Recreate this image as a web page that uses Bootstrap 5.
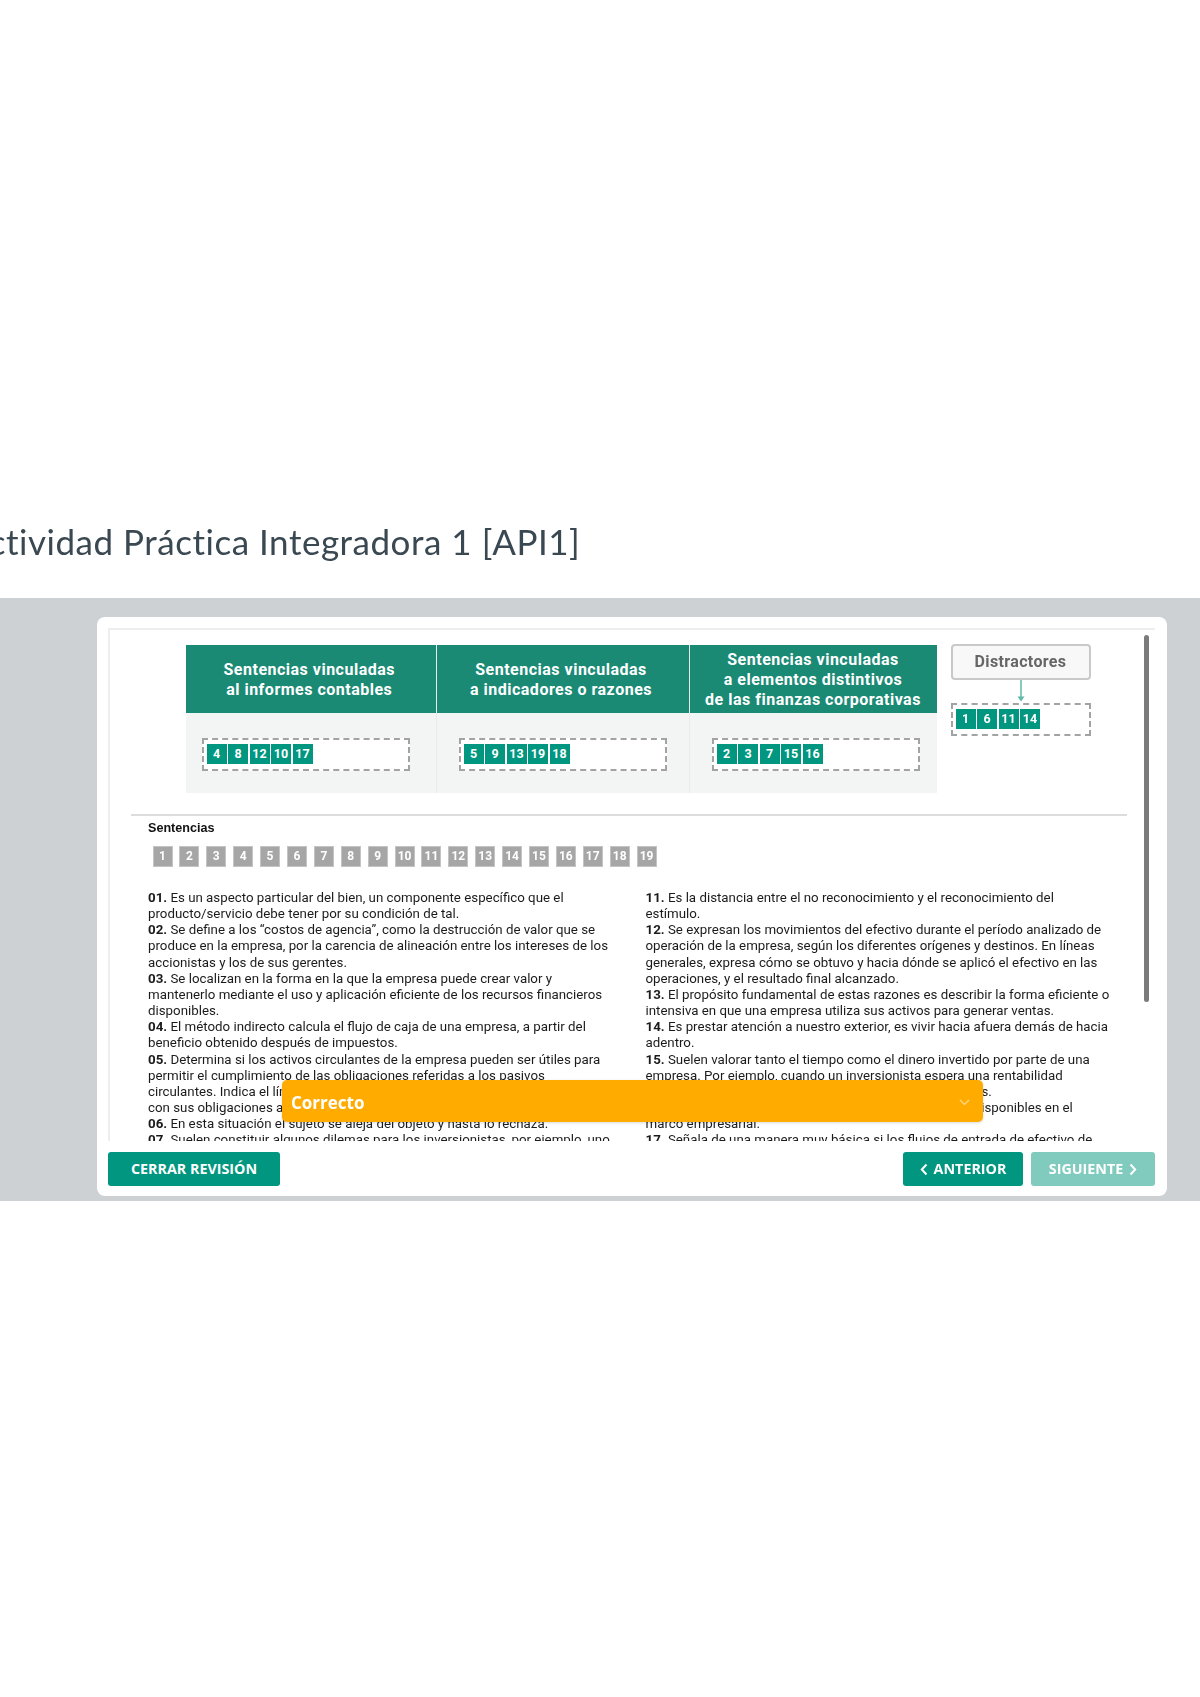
<!DOCTYPE html>
<html lang="es">
<head>
<meta charset="utf-8">
<title>Actividad Práctica Integradora 1 [API1]</title>
<link href="https://cdn.jsdelivr.net/npm/bootstrap@5.3.0/dist/css/bootstrap.min.css" rel="stylesheet">
<style>
html,body{background:#fff;margin:0}
.pagewrap{width:1200px;height:1697px;overflow:hidden;filter:blur(.6px)}
.titlezone{height:598px;padding-top:518px;overflow:hidden}
.titletext{font-family:Lato,sans-serif;font-size:35px;line-height:47px;font-weight:400;color:#3a4852;margin:0 0 0 -35px;white-space:nowrap;letter-spacing:.52px;font-variant-ligatures:none}
.band{background:#cdd1d4;height:603px;padding:19px 33px 5px 97px}
.sheet{background:#fff;border-radius:8px;height:579px;padding:11px 12px 10px 11px}
.viewer{height:513px;border-top:2px solid #eee;border-left:2px solid #eee;position:relative;overflow:hidden}
.scrollthumb{position:absolute;left:1034px;top:5px;width:5px;height:367px;background:#7b7b7b;border-radius:3px}
.graphic{padding:15px 0 0 76px}
.tablecol{background:#f3f4f4;height:148px}
.tablecol + .tablecol{border-left:1px solid #e9ebeb}
.colA{width:249.5px}.colB{width:253px}.colC{width:248px}
.headcell{background:#1a8a75;height:68px;color:#fff;font-family:Roboto,sans-serif;font-weight:700;font-size:16px;line-height:20px;letter-spacing:.5px;text-align:center;padding-top:2px}
.colA .headcell,.colB .headcell{padding-right:3px}
.colC .headcell{padding-top:1px}
.dropzone{background:#fff;border:2px dashed #a3a3a3;height:33px;width:208px;padding:4px 3px;gap:1.5px}
.zoneA{margin:25px 0 0 15.5px}.zoneB{margin:25px 0 0 22px}.zoneC{margin:25px 0 0 22px}
.numchip{width:20px;height:20px;background:#009680;color:#fff;font-family:Roboto,sans-serif;font-weight:700;font-size:12.5px;line-height:20px;text-align:center;flex:none}
.sidecol{width:140px;margin:-1px 0 0 14px}
.sidebtn{height:36px;border:2px solid #c9c9c9;border-radius:4px;background:#f8f8f8;color:#666;font-family:Roboto,sans-serif;font-weight:700;font-size:16px;letter-spacing:.35px;line-height:32px;text-align:center}
.sidearrow{display:block;margin:0 auto;height:23px;width:10px}
.sidezone{width:140px}
.divider{height:2px;background:#ddd;margin:21px 0 0 21px;width:996px}
.seclabel{font-family:"Liberation Sans",sans-serif;font-weight:700;font-size:12.6px;line-height:16px;color:#111;margin:4px 0 0 38px}
.greyrow{margin:10px 0 0 42.5px;gap:6.9px}
.greychip{width:20px;height:21px;background:#a6a6a6;border:1px solid #c4c4c4;color:#fff;font-family:Roboto,sans-serif;font-weight:700;font-size:12px;line-height:19px;text-align:center;flex:none}
.textcols{margin:23px 0 0 38px}
.textcol{width:497.5px;flex:none;font-family:Roboto,sans-serif;font-size:13.3px;line-height:16.15px;color:#1b1b1b}
.textcol div{white-space:nowrap}
.alerta{position:absolute;left:172px;top:450px;width:701px;height:42px;background:#ffab00;border-radius:5px;box-shadow:0 1px 3px rgba(0,0,0,.15);color:#fff;font-family:"Open Sans",sans-serif;font-weight:700;font-size:17px;padding:3px 9px 0}
.alertchev{width:11px;height:7px;margin-right:4px}
.footrow{margin-top:11px}
.actbtn{height:34px;padding:0;border:0;border-radius:3px;background:#009680;color:#fff;font-family:"Open Sans",sans-serif;font-weight:700;font-size:14.3px;letter-spacing:0;gap:6px}
.actbtn:hover{background:#009680;color:#fff}
.btnclose{width:172px}.btnprev{width:120px}.btnnext{width:124px;margin-left:8px;background:#80cbbe}
.btnnext:hover{background:#80cbbe}
.chevsvg{width:8px;height:13px}
</style>
</head>
<body>
<div class="pagewrap">
  <div class="titlezone"><h1 class="titletext">Actividad Práctica Integradora 1 [API1]</h1></div>
  <div class="band">
    <div class="sheet">
      <div class="viewer">
        <div class="scrollthumb"></div>
        <div class="graphic d-flex align-items-start">
          <div class="tablecol colA">
            <div class="headcell d-flex align-items-center justify-content-center">Sentencias vinculadas<br>al informes contables</div>
            <div class="dropzone zoneA d-flex"><span class="numchip">4</span><span class="numchip">8</span><span class="numchip">12</span><span class="numchip">10</span><span class="numchip">17</span></div>
          </div>
          <div class="tablecol colB">
            <div class="headcell d-flex align-items-center justify-content-center">Sentencias vinculadas<br>a indicadores o razones</div>
            <div class="dropzone zoneB d-flex"><span class="numchip">5</span><span class="numchip">9</span><span class="numchip">13</span><span class="numchip">19</span><span class="numchip">18</span></div>
          </div>
          <div class="tablecol colC">
            <div class="headcell d-flex align-items-center justify-content-center">Sentencias vinculadas<br>a elementos distintivos<br>de las finanzas corporativas</div>
            <div class="dropzone zoneC d-flex"><span class="numchip">2</span><span class="numchip">3</span><span class="numchip">7</span><span class="numchip">15</span><span class="numchip">16</span></div>
          </div>
          <div class="sidecol">
            <div class="sidebtn">Distractores</div>
            <svg class="sidearrow" viewBox="0 0 10 23"><path d="M5 0V20" stroke="#5fb8a8" stroke-width="1.5" fill="none"/><path d="M1.5 16.5L5 21.5L8.500 16.5Z" fill="#5fb8a8"/></svg>
            <div class="dropzone sidezone d-flex"><span class="numchip">1</span><span class="numchip">6</span><span class="numchip">11</span><span class="numchip">14</span></div>
          </div>
        </div>
        <div class="divider"></div>
        <div class="seclabel">Sentencias</div>
        <div class="greyrow d-flex">
          <span class="greychip">1</span><span class="greychip">2</span><span class="greychip">3</span><span class="greychip">4</span><span class="greychip">5</span><span class="greychip">6</span><span class="greychip">7</span><span class="greychip">8</span><span class="greychip">9</span><span class="greychip">10</span><span class="greychip">11</span><span class="greychip">12</span><span class="greychip">13</span><span class="greychip">14</span><span class="greychip">15</span><span class="greychip">16</span><span class="greychip">17</span><span class="greychip">18</span><span class="greychip">19</span>
        </div>
        <div class="textcols d-flex">
          <div class="textcol">
            <div><b>01.</b> Es un aspecto particular del bien, un componente específico que el</div>
            <div>producto/servicio debe tener por su condición de tal.</div>
            <div><b>02.</b> Se define a los “costos de agencia”, como la destrucción de valor que se</div>
            <div>produce en la empresa, por la carencia de alineación entre los intereses de los</div>
            <div>accionistas y los de sus gerentes.</div>
            <div><b>03.</b> Se localizan en la forma en la que la empresa puede crear valor y</div>
            <div>mantenerlo mediante el uso y aplicación eficiente de los recursos financieros</div>
            <div>disponibles.</div>
            <div><b>04.</b> El método indirecto calcula el flujo de caja de una empresa, a partir del</div>
            <div>beneficio obtenido después de impuestos.</div>
            <div><b>05.</b> Determina si los activos circulantes de la empresa pueden ser útiles para</div>
            <div>permitir el cumplimiento de las obligaciones referidas a los pasivos</div>
            <div>circulantes. Indica el límite de la empresa para cumplir</div>
            <div>con sus obligaciones a corto plazo.</div>
            <div><b>06.</b> En esta situación el sujeto se aleja del objeto y hasta lo rechaza.</div>
            <div><b>07.</b> Suelen constituir algunos dilemas para los inversionistas, por ejemplo, uno</div>
          </div>
          <div class="textcol">
            <div><b>11.</b> Es la distancia entre el no reconocimiento y el reconocimiento del</div>
            <div>estímulo.</div>
            <div><b>12.</b> Se expresan los movimientos del efectivo durante el período analizado de</div>
            <div>operación de la empresa, según los diferentes orígenes y destinos. En líneas</div>
            <div>generales, expresa cómo se obtuvo y hacia dónde se aplicó el efectivo en las</div>
            <div>operaciones, y el resultado final alcanzado.</div>
            <div><b>13.</b> El propósito fundamental de estas razones es describir la forma eficiente o</div>
            <div>intensiva en que una empresa utiliza sus activos para generar ventas.</div>
            <div><b>14.</b> Es prestar atención a nuestro exterior, es vivir hacia afuera demás de hacia</div>
            <div>adentro.</div>
            <div><b>15.</b> Suelen valorar tanto el tiempo como el dinero invertido por parte de una</div>
            <div>empresa. Por ejemplo, cuando un inversionista espera una rentabilidad</div>
            <div>mayor por su inversión a largo plazo que sus otros activos.</div>
            <div><b>16.</b> Es la capacidad de los recursos de efectivo propios disponibles en el</div>
            <div>marco empresarial.</div>
            <div><b>17.</b> Señala de una manera muy básica si los flujos de entrada de efectivo de</div>
          </div>
        </div>
        <div class="alerta d-flex align-items-center justify-content-between">
          <span>Correcto</span>
          <svg class="alertchev" viewBox="0 0 11 7"><path d="M1 1L5.500 5.500L10 1" stroke="#ffd27a" stroke-width="1.5" fill="none"/></svg>
        </div>
      </div>
      <div class="footrow d-flex justify-content-between">
        <button type="button" class="btn actbtn btnclose">CERRAR REVISIÓN</button>
        <div class="d-flex">
          <button type="button" class="btn actbtn btnprev d-flex align-items-center justify-content-center"><svg class="chevsvg" viewBox="0 0 8 13"><path d="M6.500 1.500L1.800 6.500L6.500 11.500" stroke="#fff" stroke-width="2" fill="none"/></svg>ANTERIOR</button>
          <button type="button" class="btn actbtn btnnext d-flex align-items-center justify-content-center">SIGUIENTE<svg class="chevsvg" viewBox="0 0 8 13"><path d="M1.500 1.500L6.200 6.500L1.500 11.500" stroke="#fff" stroke-width="2" fill="none"/></svg></button>
        </div>
      </div>
    </div>
  </div>
</div>
<script src="https://cdn.jsdelivr.net/npm/bootstrap@5.3.0/dist/js/bootstrap.bundle.min.js"></script>
</body>
</html>
